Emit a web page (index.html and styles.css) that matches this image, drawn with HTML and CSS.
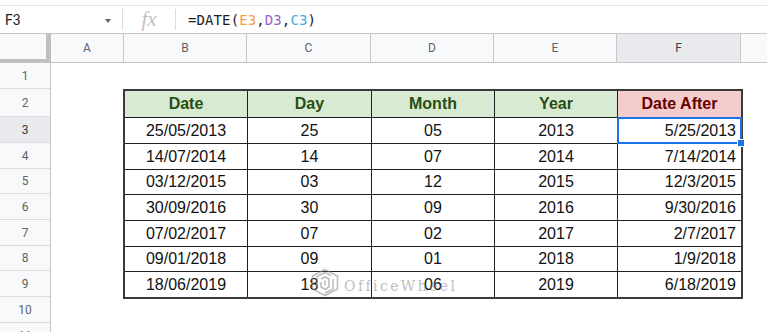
FILE: index.html
```html
<!DOCTYPE html>
<html lang="en">
<head>
    <meta charset="UTF-8">
    <meta name="viewport" content="width=device-width, initial-scale=1.0">
    <title>DATE function</title>
    <link rel="stylesheet" href="styles.css">
</head>
<body>
    <div class="top-strip"></div>

    <!-- Formula bar -->
    <div class="formula-bar">
        <div class="name-box">
            <span class="cell-ref">F3</span>
            <span class="caret"></span>
        </div>
        <div class="divider"></div>
        <div class="fx">fx</div>
        <div class="divider"></div>
        <div class="formula">=DATE(<span class="ref-e">E3</span>,<span class="ref-d">D3</span>,<span class="ref-c">C3</span>)</div>
    </div>

    <!-- Column headers -->
    <div class="col-headers">
        <div class="corner"></div>
        <div class="col-h col-a">A</div>
        <div class="col-h col-b">B</div>
        <div class="col-h col-c">C</div>
        <div class="col-h col-d">D</div>
        <div class="col-h col-e">E</div>
        <div class="col-h col-f active">F</div>
        <div class="col-h col-g"></div>
    </div>

    <div class="sheet-body">
        <div class="row-headers">
            <div class="row-h r26">1</div>
            <div class="row-h r28">2</div>
            <div class="row-h r26 active">3</div>
            <div class="row-h r26">4</div>
            <div class="row-h r25">5</div>
            <div class="row-h r26">6</div>
            <div class="row-h r26">7</div>
            <div class="row-h r25">8</div>
            <div class="row-h r26">9</div>
            <div class="row-h r26">10</div>
            <div class="row-h r26">11</div>
        </div>

        <div class="cells">
            <div class="data-table">
                <div class="th green">Date</div>
                <div class="th green">Day</div>
                <div class="th green">Month</div>
                <div class="th green">Year</div>
                <div class="th red">Date After</div>

                <div class="td">25/05/2013</div>
                <div class="td">25</div>
                <div class="td">05</div>
                <div class="td">2013</div>
                <div class="td result selected">5/25/2013<span class="sel-box"></span><span class="sel-handle"></span></div>

                <div class="td">14/07/2014</div>
                <div class="td">14</div>
                <div class="td">07</div>
                <div class="td">2014</div>
                <div class="td result">7/14/2014</div>

                <div class="td">03/12/2015</div>
                <div class="td">03</div>
                <div class="td">12</div>
                <div class="td">2015</div>
                <div class="td result">12/3/2015</div>

                <div class="td">30/09/2016</div>
                <div class="td">30</div>
                <div class="td">09</div>
                <div class="td">2016</div>
                <div class="td result">9/30/2016</div>

                <div class="td">07/02/2017</div>
                <div class="td">07</div>
                <div class="td">02</div>
                <div class="td">2017</div>
                <div class="td result">2/7/2017</div>

                <div class="td">09/01/2018</div>
                <div class="td">09</div>
                <div class="td">01</div>
                <div class="td">2018</div>
                <div class="td result">1/9/2018</div>

                <div class="td">18/06/2019</div>
                <div class="td">18</div>
                <div class="td">06</div>
                <div class="td">2019</div>
                <div class="td result">6/18/2019</div>
            </div>

            <!-- watermark -->
            <div class="watermark">
                <svg width="30" height="29" viewBox="0 0 30 29" fill="none" stroke="#8a8a8a" stroke-width="1.6">
                    <polygon points="15,1.5 27.5,8 27.5,21 15,27.5 2.5,21 2.5,8"/>
                    <polyline points="21,7.5 15,4.5 7,8.5 7,19"/>
                    <polyline points="11,11 15,9 19,11 19,19 15,21.5 11,19 11,14"/>
                    <line x1="15" y1="12.5" x2="15" y2="17.5"/>
                    <polyline points="23,11 23,21 15,25"/>
                </svg>
                <span class="wm-text">OfficeWheel</span>
            </div>
        </div>
    </div>
</body>
</html>
```

FILE: styles.css
```css
body {
    margin: 0;
    padding: 0;
    width: 767px;
    height: 332px;
    overflow: hidden;
    background: #fff;
    font-family: "Liberation Sans", Arial, sans-serif;
}

/* Top strip + formula bar */
.top-strip {
    height: 5px;
    border-bottom: 1px solid #e3e3e3;
}

.formula-bar {
    display: flex;
    align-items: center;
    height: 27px;
    border-bottom: 1px solid #c7c7c7;
}

.name-box {
    display: flex;
    align-items: center;
    justify-content: space-between;
    width: 122px;
    box-sizing: border-box;
    padding-left: 5px;
    padding-right: 11px;
}

.cell-ref {
    font-family: Roboto, "Liberation Sans", sans-serif;
    font-size: 14px;
    color: #202124;
}

.caret {
    width: 0;
    height: 0;
    border-left: 3.5px solid transparent;
    border-right: 3.5px solid transparent;
    border-top: 4px solid #5f6368;
    margin-top: 2px;
}

.divider {
    width: 1px;
    height: 21px;
    background: #dadce0;
}

.fx {
    width: 52px;
    text-align: center;
    font-family: "Liberation Serif", serif;
    font-style: italic;
    font-size: 21px;
    color: #c2c2c2;
    line-height: 27px;
}

.formula {
    padding-left: 12px;
    font-family: "DejaVu Sans Mono", monospace;
    font-size: 14px;
    color: #202124;
    letter-spacing: 0.1px;
}

.ref-e { color: #f29e4c; }
.ref-d { color: #9c5fc7; }
.ref-c { color: #4aa9de; }

/* Column headers */
.col-headers {
    display: flex;
    height: 29px;
    background: #f8f9fa;
    border-bottom: 1px solid #c4c4c4;
    box-sizing: border-box;
    font-family: Roboto, "Liberation Sans", sans-serif;
    font-size: 12px;
    color: #5f6368;
}

.corner {
    width: 51px;
    flex: none;
    box-sizing: border-box;
    border-right: 5px solid #bfbfbf;
    border-bottom: 3px solid #bfbfbf;
    background: #f8f9fa;
}

.col-h {
    flex: none;
    display: flex;
    align-items: center;
    justify-content: center;
    box-sizing: border-box;
    border-right: 1px solid #c8c8c8;
}

.col-a { width: 73px; }
.col-b { width: 123px; }
.col-c { width: 124px; }
.col-d { width: 123px; }
.col-e { width: 123px; }
.col-f { width: 124px; }
.col-g { flex: 1; border-right: none; }

.col-h.active {
    background: #e8eaed;
    color: #3c4043;
}

/* Sheet body */
.sheet-body {
    display: flex;
}

.row-headers {
    width: 51px;
    flex: none;
    background: #f8f9fa;
    border-right: 1px solid #c4c4c4;
    box-sizing: border-box;
    font-family: Roboto, "Liberation Sans", sans-serif;
    font-size: 12px;
    color: #5f6368;
}

.row-h {
    display: flex;
    align-items: center;
    justify-content: center;
    box-sizing: border-box;
    border-bottom: 1px solid #dcdcdc;
}

.r25 { height: 25px; }
.r26 { height: 26px; }
.r28 { height: 28px; }

.row-h.active {
    background: #e8eaed;
    color: #3c4043;
}

.cells {
    position: relative;
    flex: 1;
    padding-left: 72px;
    padding-top: 26px;
}

/* Data table */
.data-table {
    display: grid;
    grid-template-columns: 122px 123px 122px 122px 123px;
    grid-template-rows: 26px 25px 25px 24px 25px 25px 24px 25px;
    gap: 1px;
    width: max-content;
    background: #1f1f1f;
    border: 2px solid #3a3a3a;
    font-size: 16px;
    color: #111;
}

.th,
.td {
    display: flex;
    align-items: center;
    justify-content: center;
    background: #fff;
}

.th {
    font-weight: bold;
}

.th.green {
    background: #d9ead3;
    color: #274e13;
}

.th.red {
    background: #f4cccc;
    color: #660000;
}

.td.result {
    justify-content: flex-end;
    padding-right: 5px;
}

.td.selected {
    position: relative;
}

.sel-box {
    position: absolute;
    top: -1px;
    left: -1px;
    right: -1px;
    bottom: -1px;
    border: 2px solid #1a73e8;
}

.sel-handle {
    position: absolute;
    right: -4px;
    bottom: -4px;
    width: 6px;
    height: 6px;
    background: #1a73e8;
    border: 1px solid #fff;
}

/* Watermark */
.watermark {
    position: absolute;
    left: 259px;
    top: 205px;
    display: flex;
    align-items: flex-end;
    gap: 4px;
    opacity: 0.55;
}

.wm-text {
    font-family: "DejaVu Serif", serif;
    font-size: 14px;
    letter-spacing: 2.4px;
    color: #8a8a8a;
    line-height: 18px;
    margin-bottom: 2px;
}
```
